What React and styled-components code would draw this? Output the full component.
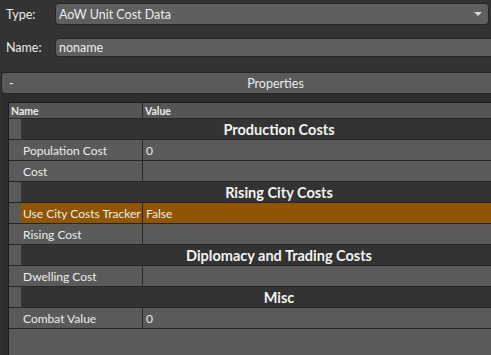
import styled, { createGlobalStyle } from "styled-components";

const GlobalStyle = createGlobalStyle`
  html, body {
    margin: 0;
    padding: 0;
    background: #333333;
    overflow: hidden;
  }
  * { box-sizing: border-box; }
`;

const Page = styled.div`
  width: 491px;
  height: 355px;
  overflow: hidden;
  background: #333333;
  font-family: "Lato", "Noto Sans", sans-serif;
  color: #ececec;
  display: flex;
  flex-direction: column;
`;

const FieldRow = styled.div`
  display: flex;
  align-items: center;
  padding-left: 6px;
  margin-top: ${(p) => p.top}px;
  height: ${(p) => p.h}px;
`;

const Label = styled.div`
  width: 49px;
  flex-shrink: 0;
  font-size: 12.5px;
`;

const Combo = styled.div`
  flex: 1;
  height: 100%;
  margin-right: 2px;
  background: #5f5f5f;
  border: 1px solid #262626;
  border-radius: 4px;
  display: flex;
  align-items: center;
  justify-content: space-between;
  padding: 0 6px 0 3px;
  font-size: 12.5px;
`;

const Arrow = styled.span`
  width: 0;
  height: 0;
  border-left: 4px solid transparent;
  border-right: 4px solid transparent;
  border-top: 4px solid #d8d8d8;
`;

const Input = styled.div`
  width: 450px;
  flex-shrink: 0;
  height: 100%;
  background: #5f5f5f;
  border: 1px solid #262626;
  border-radius: 4px 0 0 4px;
  display: flex;
  align-items: center;
  padding-left: 3px;
  font-size: 12.5px;
`;

const Section = styled.div`
  margin-top: 15px;
  margin-left: 1px;
  width: 542px;
  flex: 1;
  display: flex;
  flex-direction: column;
  background: #2d2d2d;
`;

const SectionHeader = styled.div`
  height: 22px;
  background: #5a5a5a;
  border: 1px solid #262626;
  border-radius: 4px 0 0 4px;
  display: flex;
  align-items: center;
  font-size: 12.5px;
`;

const Toggle = styled.span`
  padding-left: 7px;
  width: 0;
  overflow: visible;
`;

const HeaderTitle = styled.span`
  flex: 1;
  text-align: center;
`;

const TableFrame = styled.div`
  margin: 8px 6px 0 7px;
  flex: 1;
  background: #5a5a5a;
  border-left: 1px solid #1c1c1c;
  border-top: 1px solid #1c1c1c;
  display: flex;
  flex-direction: column;
`;

const Row = styled.div`
  display: grid;
  grid-template-columns: ${(p) => (p.head ? "134px 1fr" : "12px 122px 1fr")};
  height: ${(p) => (p.head ? 16 : 21)}px;
  border-bottom: 1px solid #262626;
  background: ${(p) => (p.head ? "#555555" : "#5a5a5a")};
`;

const Indent = styled.div`
  background: #5a5a5a;
`;

const Cell = styled.div`
  display: flex;
  align-items: center;
  padding-left: ${(p) => p.pad}px;
  font-size: ${(p) => (p.head ? 10.5 : 12)}px;
  font-weight: ${(p) => (p.head ? 700 : 400)};
  background: ${(p) => (p.hl ? "#8f5500" : "transparent")};
  border-right: ${(p) => (p.sep ? "1px solid #262626" : "none")};
  white-space: nowrap;
  overflow: hidden;
`;

const CategoryRow = styled.div`
  display: grid;
  grid-template-columns: 12px 1fr;
  height: 21px;
  border-bottom: 1px solid #262626;
  background: #333333;
`;

const CategoryTitle = styled.div`
  display: flex;
  align-items: center;
  justify-content: center;
  font-size: 14.5px;
  font-weight: 700;
  color: #f2f2f2;
`;

const data = [
  { cat: "Production Costs" },
  { name: "Population Cost", value: "0" },
  { name: "Cost", value: "" },
  { cat: "Rising City Costs" },
  { name: "Use City Costs Tracker", value: "False", hl: true },
  { name: "Rising Cost", value: "" },
  { cat: "Diplomacy and Trading Costs" },
  { name: "Dwelling Cost", value: "" },
  { cat: "Misc" },
  { name: "Combat Value", value: "0" },
];

export default function App() {
  return (
    <Page>
      <GlobalStyle />
      <FieldRow top={3} h={22}>
        <Label>Type:</Label>
        <Combo>
          <span>AoW Unit Cost Data</span>
          <Arrow />
        </Combo>
      </FieldRow>
      <FieldRow top={13} h={19}>
        <Label>Name:</Label>
        <Input>noname</Input>
      </FieldRow>
      <Section>
        <SectionHeader>
          <Toggle>-</Toggle>
          <HeaderTitle>Properties</HeaderTitle>
        </SectionHeader>
        <TableFrame>
          <Row head>
            <Cell head pad={2} sep>
              Name
            </Cell>
            <Cell head pad={2}>
              Value
            </Cell>
          </Row>
          {data.map((r, i) =>
            r.cat ? (
              <CategoryRow key={i}>
                <Indent />
                <CategoryTitle>{r.cat}</CategoryTitle>
              </CategoryRow>
            ) : (
              <Row key={i}>
                <Indent />
                <Cell pad={2} hl={r.hl} sep>
                  {r.name}
                </Cell>
                <Cell pad={3} hl={r.hl}>
                  {r.value}
                </Cell>
              </Row>
            )
          )}
        </TableFrame>
      </Section>
    </Page>
  );
}
